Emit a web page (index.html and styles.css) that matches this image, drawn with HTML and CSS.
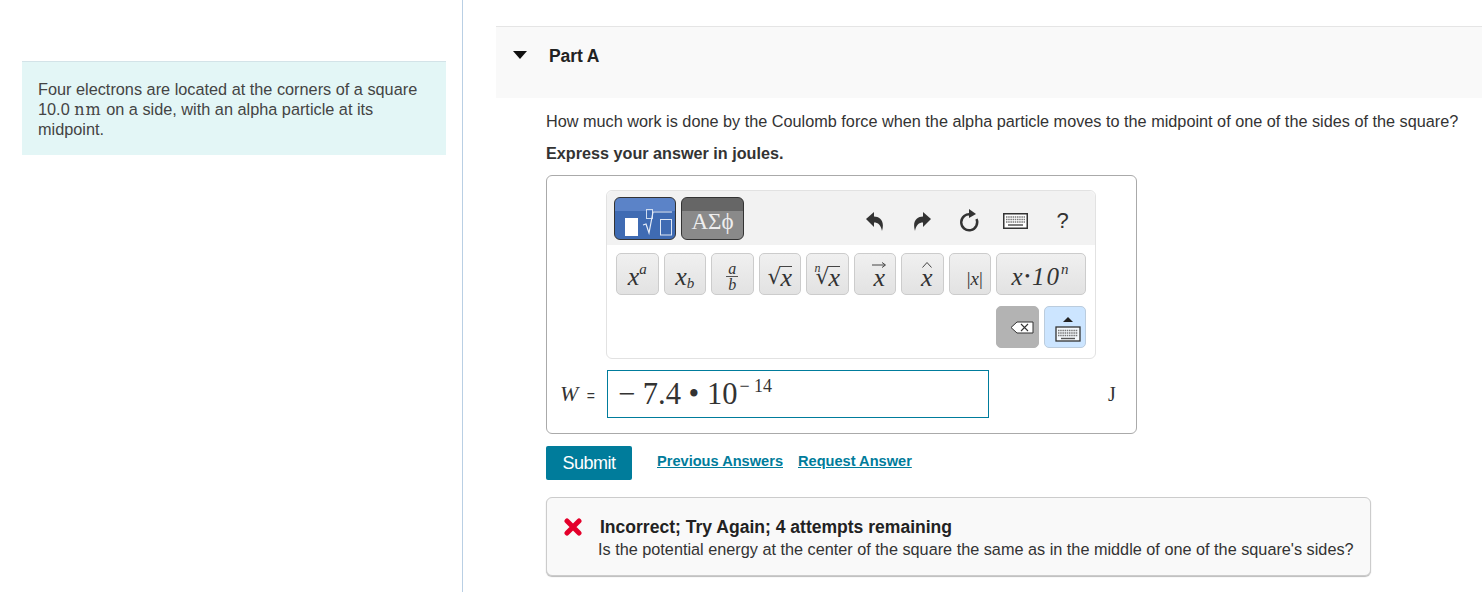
FILE: index.html
```html
<!DOCTYPE html>
<html lang="en">
<head>
<meta charset="utf-8">
<title>Part A</title>
<link rel="stylesheet" href="styles.css">
</head>
<body>
<div class="page">
  <aside class="left">
    <div class="intro">Four electrons are located at the corners of a square 10.0 <span class="unit">nm</span> on a side, with an alpha particle at its midpoint.</div>
  </aside>
  <main class="right">
    <header class="part-head">
      <svg class="caret" width="14" height="8" viewBox="0 0 14 8"><path d="M0 0H14L7 8Z" fill="#111"/></svg>
      <span class="part-title">Part A</span>
    </header>
    <div class="body">
      <p class="question">How much work is done by the Coulomb force when the alpha particle moves to the midpoint of one of the sides of the square?</p>
      <p class="express">Express your answer in joules.</p>
      <section class="answer">
        <div class="editor">
          <div class="ed-head">
            <div class="tabs">
              <button class="tab tab-blue" aria-label="Templates">
                <svg width="60" height="41" viewBox="0 0 60 41">
                  <rect x="10" y="20" width="13" height="18" fill="#fff"/>
                  <rect x="31.500" y="11.500" width="6" height="9" fill="none" stroke="#cfdcf0" stroke-width="1"/>
                  <path d="M28 27l3-1 3 9 4-21h19" fill="none" stroke="#e8eef8" stroke-width="1.200"/>
                  <rect x="45.500" y="21.500" width="11" height="15.500" fill="none" stroke="#dfe8f5" stroke-width="1"/>
                </svg>
              </button>
              <button class="tab tab-grey">ΑΣϕ</button>
            </div>
            <div class="tools">
              <span class="slot"><svg width="18" height="19" viewBox="0 0 18 19"><path d="M0 7L8 0V4.500C14 4.500 19 9 16 19C15 13 12 10.500 8 10.500V15Z" fill="#333"/></svg></span>
              <span class="slot"><svg width="18" height="19" viewBox="0 0 18 19"><path d="M18 7L10 0V4.500C4 4.500 -1 9 2 19C3 13 6 10.500 10 10.500V15Z" fill="#333"/></svg></span>
              <span class="slot"><svg width="22" height="24" viewBox="0 0 22 24"><path d="M13 5.500A8 8 0 1 0 18.500 10" fill="none" stroke="#333" stroke-width="2.400"/><path d="M11 0L18 5L11 9Z" fill="#333"/></svg></span>
              <span class="slot"><svg width="25" height="16" viewBox="0 0 25 16"><rect x=".75" y=".75" width="23.500" height="14.500" fill="#fff" stroke="#333" stroke-width="1.500"/><path d="M3 4h19M3 6.500h19M3 9h19" stroke="#777" stroke-width="1.300" stroke-dasharray="1.500 .7"/><path d="M5 12h15" stroke="#555" stroke-width="1.500"/></svg></span>
              <span class="slot help">?</span>
            </div>
          </div>
          <div class="ed-row">
            <button class="key math"><i>x</i><sup>a</sup></button>
            <button class="key math"><i>x</i><sub>b</sub></button>
            <button class="key math frac"><span class="num">a</span><span class="den">b</span></button>
            <button class="key math"><span class="rad">√</span><i class="over">x</i></button>
            <button class="key math"><span class="idx">n</span><span class="rad">√</span><i class="over">x</i></button>
            <button class="key math accent">
              <svg class="acc" width="14" height="6" viewBox="0 0 14 6"><path d="M0 3H13M10 .5L13.500 3L10 5.500" fill="none" stroke="#444" stroke-width="1"/></svg>
              <i>x</i>
            </button>
            <button class="key math accent">
              <svg class="acc" width="10" height="6" viewBox="0 0 10 6"><path d="M.5 5.500L5 .5L9.500 5.500" fill="none" stroke="#444" stroke-width="1"/></svg>
              <i>x</i>
            </button>
            <button class="key math abs">|<i>x</i>|</button>
            <button class="key wide math"><i>x</i><span class="dot">•</span><i>10</i><sup>n</sup></button>
          </div>
          <div class="ed-row ed-row-end">
            <button class="key key-del" aria-label="Delete">
              <svg width="24" height="13" viewBox="0 0 24 13"><path d="M1 6.500L7 1H23V12H7Z" fill="#fff" stroke="#333" stroke-width="1"/><path d="M11 3l7 7M18 3l-7 7" stroke="#333" stroke-width="1.100"/></svg>
            </button>
            <button class="key key-kb" aria-label="Keyboard">
              <svg width="26" height="28" viewBox="0 0 26 28"><path d="M8 6L13 1L18 6Z" fill="#222"/><rect x="1" y="11" width="24" height="14" fill="#f4f8fc" stroke="#333" stroke-width="1.300"/><path d="M3 14.500h20M3 17h20M3 19.500h20" stroke="#777" stroke-width="1.300" stroke-dasharray="1.500 .7"/><path d="M6 22.500h14" stroke="#555" stroke-width="1.400"/></svg>
            </button>
          </div>
        </div>
        <div class="input-row">
          <span class="var"><i class="w">W</i> <span class="eq">=</span></span>
          <div class="input"><span class="minus">−</span> 7.4 • 10<sup class="exp"><span class="exp-minus">−</span> 14</sup></div>
          <span class="unit-j">J</span>
        </div>
      </section>
      <div class="actions">
        <button class="submit">Submit</button>
        <a class="link" href="#">Previous Answers</a>
        <a class="link" href="#">Request Answer</a>
      </div>
      <section class="feedback">
        <div class="fb-title">
          <svg width="18" height="18" viewBox="0 0 18 18"><path d="M3 3L15 15M15 3L3 15" stroke="#e4002b" stroke-width="5" stroke-linecap="round"/></svg>
          <strong>Incorrect; Try Again; 4 attempts remaining</strong>
        </div>
        <p class="fb-text">Is the potential energy at the center of the square the same as in the middle of one of the square's sides?</p>
      </section>
    </div>
  </main>
</div>
</body>
</html>
```
FILE: styles.css
```css
* { box-sizing: border-box; }
html, body { margin: 0; height: 100%; }
body { font-family: "Liberation Sans", Arial, sans-serif; color: #333; background: #fff; overflow: hidden; }
.page { display: flex; height: 592px; }
.left { width: 463px; flex: none; border-right: 1px solid #b9cfe4; padding: 61px 16px 0 22px; }
.intro { background: #e3f6f6; border-top: 1px solid #d3e3e8; height: 94px; padding: 17px 16px 0; font-size: 16.300px; line-height: 20px; color: #444; }
.unit { font-family: "DejaVu Serif", serif; font-size: 16px; letter-spacing: 1px; line-height: 0; }
.right { flex: 1; padding: 26px 0 0 33px; min-width: 0; }
.part-head { display: flex; align-items: flex-start; height: 72px; background: #f9f9f9; border-top: 1px solid #e5e5e5; padding: 24px 0 0 17px; }
.caret { margin-right: 22px; }
.part-title { font-size: 17.500px; font-weight: bold; color: #222; line-height: 10px; letter-spacing: -.1px; }
.body { padding-left: 50px; }
.question { margin: 13px 0 0; font-size: 16.250px; line-height: 20px; white-space: nowrap; }
.express { margin: 12px 0 0; font-size: 16.200px; line-height: 20px; font-weight: bold; }
.answer { width: 591px; height: 259px; margin-top: 12px; border: 1px solid #aaa; border-radius: 6px; padding: 14px 40px 0 59px; }
.editor { width: 490px; height: 169px; border: 1px solid #e2e2e2; border-radius: 6px; background: #fff; }
.ed-head { display: flex; justify-content: space-between; align-items: center; height: 54px; background: #f2f2f2; border-radius: 6px 6px 0 0; padding: 0 9px 0 7px; }
.tabs { display: flex; gap: 5px; }
.tab { width: 62px; height: 43px; border: 1px solid #333; border-radius: 6px; padding: 0; cursor: pointer; color: #eee; }
.tab svg { display: block; }
.tab-blue { background: linear-gradient(#5b83c8 0 32%, #3f6bb3 32% 100%); }
.tab-grey { width: 63px; background: linear-gradient(#666 0 32%, #8a8a8a 32% 100%); font-family: "Liberation Serif", serif; font-size: 23px; padding-top: 7px; }
.tools { display: flex; align-items: center; margin-top: 6px; }
.slot { width: 47px; display: flex; justify-content: center; align-items: center; }
.help { font-size: 22px; line-height: 24px; color: #333; }
.ed-row { display: flex; gap: 5px; padding: 8px 0 0 9px; }
.ed-row-end { justify-content: flex-end; padding: 11px 9px 0 0; }
.key { width: 42.500px; height: 42px; padding: 0; border: 1px solid #ccc; border-radius: 5px; background: linear-gradient(#f0f0f0, #e2e2e2); color: #333; cursor: pointer; display: flex; align-items: center; justify-content: center; }
.math { font-family: "Liberation Serif", serif; font-size: 26px; line-height: 1; padding-top: 6px; }
.math i { font-style: italic; }
.math sup, .math sub { font-size: 15px; font-style: italic; line-height: 1; position: relative; }
.math sup { top: -8px; }
.math sub { top: 6px; }
.frac { flex-direction: column; font-style: italic; font-size: 16px; line-height: 15px; padding-top: 5px; }
.num { border-bottom: 1px solid #555; padding: 0 2px; }
.rad { font-size: 22px; font-family: "DejaVu Sans", sans-serif; }
.over { border-top: 1px solid #444; line-height: 22px; margin-left: -1px; }
.idx { font-size: 12px; font-style: italic; align-self: flex-start; margin: 2px -5px 0 0; }
.accent { flex-direction: column; line-height: 18px; padding: 1px 0 0 9px; }
.acc { display: block; margin-bottom: 1px; }
.abs { font-size: 19px; padding: 8px 0 0 10px; }
.wide { width: 90px; font-size: 25px; letter-spacing: 2px; padding-top: 4px; }
.wide sup { top: -7px; }
.dot { font-size: 15px; }
.key-del { background: #b3b3b3; border-color: #b3b3b3; padding: 0 0 0 9px; }
.key-kb { background: #cce5ff; border-color: #bcd; padding: 6px 0 0 7px; }
.input-row { display: flex; align-items: center; margin: 11px -40px 0 -59px; height: 48px; }
.var { flex: none; width: 60px; padding-right: 12px; text-align: right; font-family: "Liberation Serif", serif; font-size: 22px; white-space: nowrap; }
.w { margin-right: 3px; }
.eq { font-family: "Liberation Sans", sans-serif; font-size: 14px; }
.input { flex: none; width: 382px; height: 48px; border: 1px solid #007c9c; font-family: "Liberation Serif", serif; font-size: 30.500px; line-height: 46px; padding-left: 10px; white-space: nowrap; color: #333; }
.exp { font-size: 18px; line-height: 0; vertical-align: baseline; position: relative; top: -12px; margin-left: 2px; }
.unit-j { margin-left: 119px; font-family: "Liberation Serif", serif; font-size: 20px; }
.actions { display: flex; align-items: center; margin-top: 12px; height: 34px; }
.submit { width: 86px; height: 34px; background: #007c9b; color: #fff; border: 0; border-radius: 2px; font: 18px "Liberation Sans", sans-serif; letter-spacing: -.5px; padding: 0; cursor: pointer; }
.link { color: #007c9b; font-size: 14.600px; font-weight: bold; margin: -4px 15px 0 0; }
.submit + .link { margin-left: 25px; }
.feedback { width: 825px; height: 79px; margin-top: 17px; background: #f9f9f9; border: 1px solid #ccc; border-radius: 6px; box-shadow: 0 1px 1px #bbb; padding: 18px 0 0 17px; }
.fb-title { display: flex; align-items: center; gap: 18px; height: 22px; font-size: 17.550px; color: #222; }
.fb-text { margin: 1px 0 0 34px; font-size: 16.260px; line-height: 20px; white-space: nowrap; }
```
